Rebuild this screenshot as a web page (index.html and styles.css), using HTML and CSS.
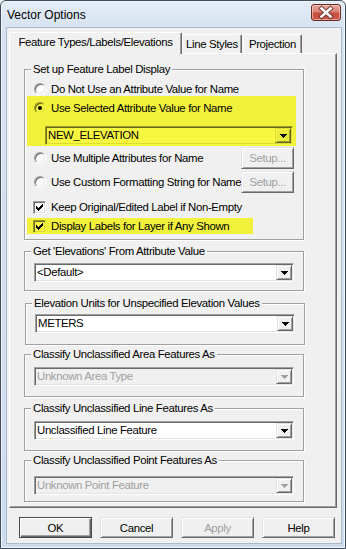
FILE: index.html
```html
<!DOCTYPE html>
<html>
<head>
<meta charset="utf-8">
<title>Vector Options</title>
<link rel="stylesheet" href="styles.css">
</head>
<body>
<div class="window">
  <div class="titlebar">
    <span class="title">Vector Options</span>
    <div class="close">
      <svg width="28" height="15" viewBox="0 0 28 15">
        <path d="M9.5 3.5 L18.5 11.5 M18.5 3.5 L9.5 11.5" stroke="#5a2b27" stroke-width="4.6" stroke-linecap="square" fill="none" opacity="0.75"/>
        <path d="M9.5 3.5 L18.5 11.5 M18.5 3.5 L9.5 11.5" stroke="#ffffff" stroke-width="2.6" stroke-linecap="square" fill="none"/>
      </svg>
    </div>
  </div>
  <div class="client">
    <div class="tabs">
      <div class="tab active">Feature Types/Labels/Elevations</div>
      <div class="tab tab-line">Line Styles</div>
      <div class="tab tab-proj">Projection</div>
    </div>
    <div class="panel">
      <div class="group g-label">
        <div class="legend">Set up Feature Label Display</div>
        <div class="opt row-first"><span class="radio"></span><span>Do Not Use an Attribute Value for Name</span></div>
        <div class="hl hl-name">
          <div class="opt"><span class="radio on"></span><span>Use Selected Attribute Value for Name</span></div>
          <div class="combo combo-hl"><span class="combo-text">NEW_ELEVATION</span><span class="combo-btn"><svg class="arrow" width="7" height="4" viewBox="0 0 7 4"><path d="M0 0h7v1H0zM1 1h5v1H1zM2 2h3v1H2zM3 3h1v1H3z"/></svg></span></div>
        </div>
        <div class="opt opt-btn row-multi"><span class="radio"></span><span>Use Multiple Attributes for Name</span><span class="btn setup">Setup...</span></div>
        <div class="opt opt-btn row-custom"><span class="radio"></span><span>Use Custom Formatting String for Name</span><span class="btn setup">Setup...</span></div>
        <div class="opt row-keep"><span class="check"><svg width="7" height="7" viewBox="0 0 7 7"><path d="M6 0h1v1H6zM5 1h2v1H5zM0 2h1v1H0zM4 2h3v1H4zM0 3h2v1H0zM3 3h3v1H3zM0 4h5v1H0zM1 5h3v1H1zM2 6h1v1H2z"/></svg></span><span>Keep Original/Edited Label if Non-Empty</span></div>
        <div class="hl hl-display">
          <div class="opt opt-tall"><span class="check"><svg width="7" height="7" viewBox="0 0 7 7"><path d="M6 0h1v1H6zM5 1h2v1H5zM0 2h1v1H0zM4 2h3v1H4zM0 3h2v1H0zM3 3h3v1H3zM0 4h5v1H0zM1 5h3v1H1zM2 6h1v1H2z"/></svg></span><span>Display Labels for Layer if Any Shown</span></div>
        </div>
      </div>

      <div class="group g-elev">
        <div class="legend">Get 'Elevations' From Attribute Value</div>
        <div class="combo"><span class="combo-text">&lt;Default&gt;</span><span class="combo-btn"><svg class="arrow" width="7" height="4" viewBox="0 0 7 4"><path d="M0 0h7v1H0zM1 1h5v1H1zM2 2h3v1H2zM3 3h1v1H3z"/></svg></span></div>
      </div>

      <div class="group g-units">
        <div class="legend">Elevation Units for Unspecified Elevation Values</div>
        <div class="combo"><span class="combo-text">METERS</span><span class="combo-btn"><svg class="arrow" width="7" height="4" viewBox="0 0 7 4"><path d="M0 0h7v1H0zM1 1h5v1H1zM2 2h3v1H2zM3 3h1v1H3z"/></svg></span></div>
      </div>

      <div class="group g-area">
        <div class="legend">Classify Unclassified Area Features As</div>
        <div class="combo disabled"><span class="combo-text">Unknown Area Type</span><span class="combo-btn"><svg class="arrow" width="7" height="4" viewBox="0 0 7 4"><path d="M0 0h7v1H0zM1 1h5v1H1zM2 2h3v1H2zM3 3h1v1H3z"/></svg></span></div>
      </div>

      <div class="group g-line">
        <div class="legend">Classify Unclassified Line Features As</div>
        <div class="combo"><span class="combo-text">Unclassified Line Feature</span><span class="combo-btn"><svg class="arrow" width="7" height="4" viewBox="0 0 7 4"><path d="M0 0h7v1H0zM1 1h5v1H1zM2 2h3v1H2zM3 3h1v1H3z"/></svg></span></div>
      </div>

      <div class="group g-point">
        <div class="legend">Classify Unclassified Point Features As</div>
        <div class="combo disabled"><span class="combo-text">Unknown Point Feature</span><span class="combo-btn"><svg class="arrow" width="7" height="4" viewBox="0 0 7 4"><path d="M0 0h7v1H0zM1 1h5v1H1zM2 2h3v1H2zM3 3h1v1H3z"/></svg></span></div>
      </div>
    </div>
    <div class="actions">
      <span class="btn btn-main default">OK</span>
      <span class="btn btn-main">Cancel</span>
      <span class="btn btn-main disabled-text">Apply</span>
      <span class="btn btn-main">Help</span>
    </div>
  </div>
</div>
</body>
</html>
```

FILE: styles.css
```css
html, body {
  margin: 0;
  padding: 0;
  background: #ffffff;
}

body {
  font-family: "Liberation Sans", Arial, sans-serif;
  font-size: 11.4px;
  letter-spacing: -0.35px;
  color: #000000;
}

.window {
  box-sizing: border-box;
  width: 346px;
  height: 549px;
  border: 1px solid #3e4b5b;
  border-radius: 6px 6px 0 0;
  background: linear-gradient(#e3ecf7 0px, #d7e3f1 28px, #cfdced 549px);
  box-shadow: inset 0 0 0 1px #f1f6fc;
  display: flex;
  flex-direction: column;
}

.titlebar {
  flex: none;
  height: 27px;
  display: flex;
  align-items: center;
  padding: 0 4px 0 6px;
}

.title {
  flex: 1;
  font-size: 12px;
  letter-spacing: 0;
  color: #000000;
}

.close {
  align-self: flex-start;
  margin-top: 3px;
  box-sizing: border-box;
  width: 30px;
  height: 17px;
  border: 1px solid #6e2a24;
  border-radius: 3px;
  background: linear-gradient(#e8a89c 0%, #d98173 45%, #c7503f 55%, #cc5a48 100%);
  box-shadow: inset 0 0 0 1px rgba(255, 225, 215, 0.55);
  display: flex;
  align-items: center;
  justify-content: center;
}

.close svg {
  display: block;
}

.client {
  flex: 1;
  margin: 0 4px 5px 6px;
  background: #f0f0f0;
  box-shadow: 0 0 0 1px #a9bacf;
  display: flex;
  flex-direction: column;
  padding: 4px 4px 0 2px;
}

/* tabs */
.tabs {
  flex: none;
  height: 21px;
  display: flex;
  align-items: flex-end;
}

.tab {
  box-sizing: border-box;
  height: 19px;
  border: 1px solid;
  border-bottom: 0;
  border-color: #ffffff #696969 transparent #ffffff;
  border-radius: 2px 2px 0 0;
  box-shadow: inset -1px 0 0 #a0a0a0;
  background: #f0f0f0;
  display: flex;
  align-items: center;
  justify-content: center;
  padding-bottom: 0;
  white-space: nowrap;
}

.tab.active {
  width: 173px;
  height: 22px;
  margin-bottom: -1px;
  padding-bottom: 3px;
  position: relative;
  z-index: 1;
}

.tab-line {
  width: 60px;
}

.tab-proj {
  width: 59px;
  margin-left: 1px;
}

/* panel */
.panel {
  flex: none;
  box-sizing: border-box;
  border: 1px solid;
  border-color: #ffffff #696969 #696969 #ffffff;
  box-shadow: inset -1px -1px 0 #a0a0a0;
  padding: 15px 0 5px 14px;
}

.group {
  box-sizing: border-box;
  width: 280px;
  border: 1px solid #a0a0a0;
  box-shadow: inset 1px 1px 0 #ffffff, 1px 1px 0 #ffffff;
  line-height: 14px;
}

.legend {
  width: fit-content;
  margin: -8px 0 0 6px;
  padding: 0 2px;
  height: 14px;
  background: #f0f0f0;
  white-space: nowrap;
}

.g-label {
  padding-bottom: 5px;
}

.g-elev {
  margin-top: 11px;
  padding-bottom: 8px;
}
.g-elev .combo { margin-top: 5px; }

.g-units {
  margin-top: 12px;
  margin-left: 1px;
  padding-bottom: 11px;
}
.g-units .combo { margin-top: 4px; }

.g-area {
  margin-top: 9px;
  padding-bottom: 10px;
}
.g-area .combo { margin-top: 6px; }

.g-line {
  margin-top: 11px;
  padding-bottom: 10px;
}
.g-line .combo { margin-top: 6px; }

.g-point {
  margin-top: 9px;
  padding-bottom: 6px;
}
.g-point .combo { margin-top: 9px; }

/* option rows */
.opt {
  display: flex;
  align-items: center;
  height: 14px;
  white-space: nowrap;
}

.opt-tall {
  height: 16px;
}

.opt-btn {
  height: 22px;
}

.row-first { margin-top: 6px; }
.row-multi { margin-top: 1px; }
.row-custom { margin-top: 2px; }
.row-keep { margin-top: 7px; }

.radio {
  flex: none;
  box-sizing: border-box;
  width: 12px;
  height: 12px;
  margin: 0 5px 0 9px;
  border-radius: 50%;
  border: 1px solid;
  border-color: #a0a0a0 #ffffff #ffffff #a0a0a0;
  box-shadow: inset 1px 1px 0 #696969, inset -1px -1px 0 #e3e3e3;
  background: #ffffff;
  display: flex;
  align-items: center;
  justify-content: center;
}

.radio.on::after {
  content: "";
  width: 4px;
  height: 4px;
  border-radius: 50%;
  background: #000000;
}

.check {
  flex: none;
  box-sizing: border-box;
  width: 13px;
  height: 13px;
  margin: 0 5px 0 8px;
  border: 1px solid;
  border-color: #a0a0a0 #ffffff #ffffff #a0a0a0;
  box-shadow: inset 1px 1px 0 #696969, inset -1px -1px 0 #e3e3e3;
  background: #ffffff;
  display: flex;
  align-items: center;
  justify-content: center;
}

.check svg {
  display: block;
  fill: #000000;
}

/* yellow highlight */
.hl {
  background: #f1f13c;
  margin-left: 2px;
}

.hl .radio {
  margin-left: 7px;
  border-color: #9a9a26 #f7f742 #f7f742 #9a9a26;
  box-shadow: inset 1px 1px 0 #66661a, inset -1px -1px 0 #dcdc37;
  background: #f7f742;
}

.hl .check {
  margin-left: 6px;
  border-color: #9a9a26 #f7f742 #f7f742 #9a9a26;
  box-shadow: inset 1px 1px 0 #66661a, inset -1px -1px 0 #dcdc37;
  background: #f7f742;
}

.hl-name {
  margin-right: 7px;
  padding: 5px 0 1px 0;
}

.hl-display {
  width: 226px;
  margin-top: 4px;
}

/* combo boxes */
.combo {
  box-sizing: border-box;
  height: 19px;
  margin: 0 9px;
  border: 1px solid;
  border-color: #a0a0a0 #ffffff #ffffff #a0a0a0;
  box-shadow: inset 1px 1px 0 #696969, inset -1px -1px 0 #e3e3e3;
  background: #ffffff;
  padding: 1px;
  display: flex;
}

.combo-text {
  flex: 1;
  line-height: 15px;
  padding-left: 1px;
  white-space: nowrap;
  overflow: hidden;
}

.combo-btn {
  flex: none;
  box-sizing: border-box;
  width: 16px;
  height: 15px;
  border: 1px solid;
  border-color: #e3e3e3 #696969 #696969 #e3e3e3;
  box-shadow: inset 1px 1px 0 #ffffff, inset -1px -1px 0 #a0a0a0;
  background: #f0f0f0;
  display: flex;
  align-items: center;
  justify-content: center;
}

.arrow {
  display: block;
  fill: #000000;
}

.combo.disabled {
  background: #f0f0f0;
}

.combo.disabled .combo-text {
  color: #a0a0a0;
}

.combo.disabled .arrow {
  fill: #a0a0a0;
}

.combo-hl {
  height: 19px;
  margin: 11px 3px 0 18px;
  border-color: #9a9a26 #f7f742 #f7f742 #9a9a26;
  box-shadow: inset 1px 1px 0 #66661a, inset -1px -1px 0 #dcdc37;
  background: #f7f742;
}

.combo-hl .combo-btn {
  border-color: #dcdc37 #66661a #66661a #dcdc37;
  box-shadow: inset 1px 1px 0 #f7f742, inset -1px -1px 0 #9a9a26;
  background: #ebeb3b;
}

/* buttons */
.btn {
  box-sizing: border-box;
  border: 1px solid;
  border-color: #e3e3e3 #696969 #696969 #e3e3e3;
  box-shadow: inset 1px 1px 0 #ffffff, inset -1px -1px 0 #a0a0a0;
  background: #f0f0f0;
  display: flex;
  align-items: center;
  justify-content: center;
  white-space: nowrap;
}

.setup {
  flex: none;
  width: 53px;
  height: 22px;
  margin-left: auto;
  margin-right: 9px;
  color: #a0a0a0;
}

.actions {
  flex: none;
  display: flex;
  gap: 8px;
  margin-top: 9px;
  padding-left: 10px;
}

.btn-main {
  width: 73px;
  height: 21px;
}

.btn-main.default {
  border-color: #4a4a4a;
  box-shadow: inset 1px 1px 0 #ffffff, inset -1px -1px 0 #696969, inset -2px -2px 0 #a0a0a0;
}

.disabled-text {
  color: #a0a0a0;
}
```
